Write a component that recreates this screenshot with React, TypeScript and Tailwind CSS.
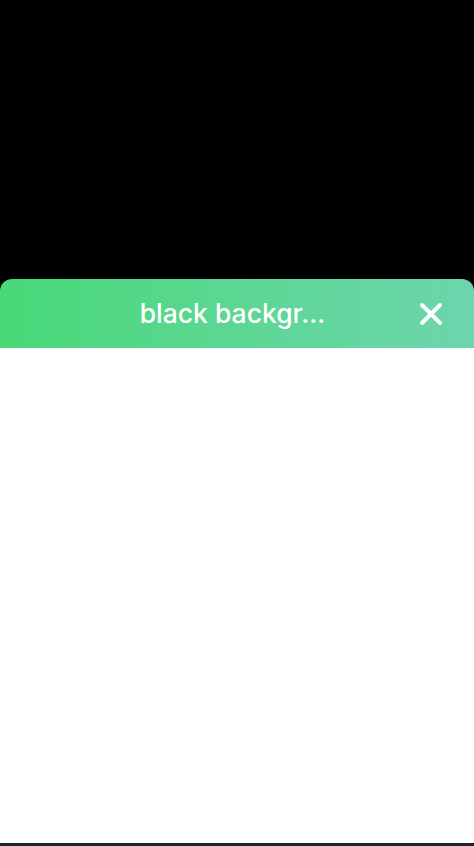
import { X } from "lucide-react";

export default function App() {
  return (
    <div className="flex h-[846px] w-full flex-col bg-black font-['Inter',sans-serif]">
      <div className="h-[279px] shrink-0" />
      <div className="relative flex h-[69px] shrink-0 items-center justify-center rounded-t-[12px] bg-gradient-to-r from-[#48d877] to-[#6dd5ad] pr-[9px]">
        <span className="text-[26.5px] font-medium leading-none text-white">
          black backgr...
        </span>
        <button className="absolute right-[25px] top-1/2 -translate-y-1/2 text-white">
          <X size={36} strokeWidth={2.6} />
        </button>
      </div>
      <div className="flex-1 bg-white" />
      <div className="h-[3px] shrink-0 bg-[#1f2430]" />
    </div>
  );
}
